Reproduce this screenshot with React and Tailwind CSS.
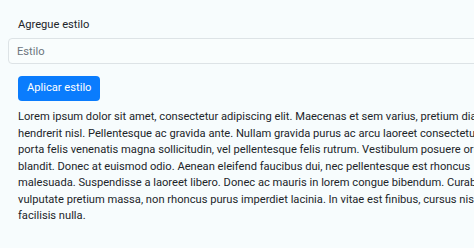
const lines = [
  'Lorem ipsum dolor sit amet, consectetur adipiscing elit. Maecenas et sem varius, pretium diam',
  'hendrerit nisl. Pellentesque ac gravida ante. Nullam gravida purus ac arcu laoreet consectetur',
  'porta felis venenatis magna sollicitudin, vel pellentesque felis rutrum. Vestibulum posuere ornare',
  'blandit. Donec at euismod odio. Aenean eleifend faucibus dui, nec pellentesque est rhoncus',
  'malesuada. Suspendisse a laoreet libero. Donec ac mauris in lorem congue bibendum. Curabitur',
  'vulputate pretium massa, non rhoncus purus imperdiet lacinia. In vitae est finibus, cursus nisi',
  'facilisis nulla.',
];

export default function App() {
  return (
    <div className="min-h-[248px] w-[474px] overflow-hidden bg-[#f7fcfd] pl-2 pt-[17px] font-['Roboto',sans-serif] text-[#212529]">
      <label className="ml-[10px] block text-[11.15px] leading-[16px]">Agregue estilo</label>
      <input
        type="text"
        placeholder="Estilo"
        className="mt-[5px] block h-[26px] w-[520px] rounded-[4px] border border-[#dde3e6] bg-[#f9fdfd] px-2 text-[11.15px] placeholder:text-[#6c757d]"
      />
      <button className="ml-[10px] mt-3 h-[25px] rounded-[4px] bg-[#0a7cfd] px-[9px] text-[11.15px] text-white">
        Aplicar estilo
      </button>
      <p className="ml-[10px] mt-2 whitespace-nowrap text-[11.15px] leading-[16.5px]">
        {lines.map((line, i) => (
          <span key={i} className="block">{line}</span>
        ))}
      </p>
    </div>
  );
}
